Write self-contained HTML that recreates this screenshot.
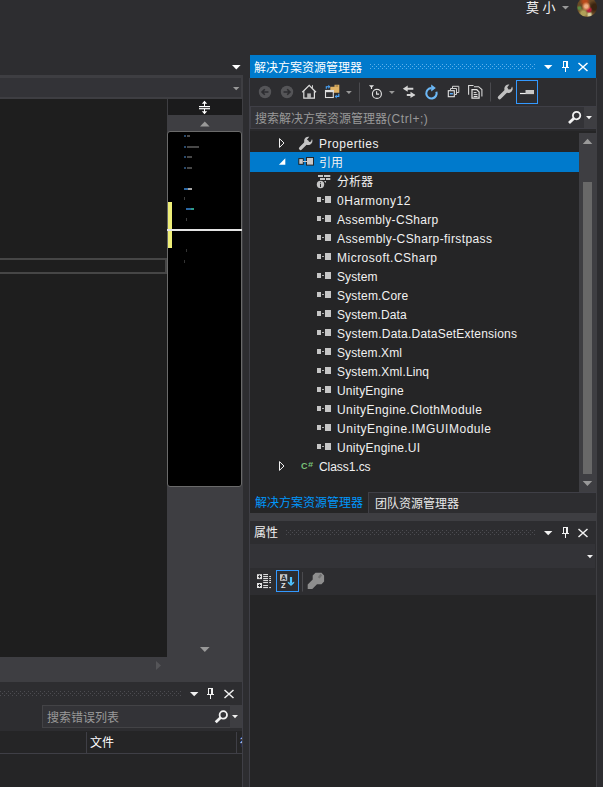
<!DOCTYPE html>
<html lang="zh-CN">
<head>
<meta charset="utf-8">
<title>Visual Studio</title>
<style>
html,body{margin:0;padding:0;}
body{width:603px;height:787px;overflow:hidden;background:#2d2d30;position:relative;
 font-family:"Liberation Sans","Noto Sans CJK SC",sans-serif;font-size:12px;color:#f1f1f1;}
.a{position:absolute;}
.t{position:absolute;white-space:nowrap;line-height:16px;height:16px;}
svg{position:absolute;overflow:visible;}
.grip{position:absolute;height:5px;
 background-image:radial-gradient(circle at .5px .5px,var(--g) .6px,transparent .7px),radial-gradient(circle at 2.5px 2.5px,var(--g) .6px,transparent .7px);
 background-size:4px 4px;}
.row{position:absolute;left:250px;width:329px;height:19px;}
.row .t{top:3px;}
</style>
</head>
<body>

<!-- ===== top-right user ===== -->
<div class="t" id="user" style="left:526px;top:0px;font-size:13px;">莫 小</div>
<svg style="left:562px;top:6px" width="7" height="4"><path d="M0 0h7l-3.5 3.5z" fill="#999"/></svg>
<div class="a" id="avatar" style="left:577px;top:-3px;width:19.500px;height:20px;border-radius:50%;overflow:hidden;
 background:radial-gradient(circle at 46% 47%,#f0b088 0 10%,rgba(232,150,100,.9) 16%,rgba(200,90,50,0) 30%),
 radial-gradient(circle at 60% 64%,#b81c3c 0 9%,rgba(160,30,50,0) 20%),
 radial-gradient(circle at 32% 82%,#b0a058 0 10%,rgba(150,130,60,0) 26%),
 radial-gradient(circle at 62% 88%,#d6cf9c 0 6%,rgba(200,190,120,0) 16%),
 radial-gradient(circle at 12% 56%,#5c8c44 0 5%,rgba(70,110,50,0) 14%),
 radial-gradient(circle at 40% 22%,#b84a1c 0 10%,rgba(150,60,20,0) 28%),
 radial-gradient(circle at 88% 50%,#3a2410 0 14%,rgba(60,40,20,0) 34%),
 #6a4a26;"></div>

<!-- ===== document well ===== -->
<svg style="left:232px;top:65px" width="9" height="5"><path d="M0 0h8.6l-4.3 4.4z" fill="#fff"/></svg>
<div class="a" style="left:0;top:75px;width:243px;height:24px;background:#3e3e42;"></div>
<div class="a" style="left:0;top:78px;width:241px;height:19px;background:#333337;"></div>
<svg style="left:233px;top:87px" width="7" height="4"><path d="M0 0h6.4l-3.2 3.3z" fill="#999"/></svg>

<!-- editor -->
<div class="a" style="left:0;top:99px;width:167px;height:558px;background:#1e1e1e;"></div>
<div class="a" style="left:-2px;top:258px;width:165px;height:12px;border:2px solid #464646;"></div>
<!-- scroll column -->
<div class="a" style="left:167px;top:99px;width:76px;height:583px;background:#3e3e42;"></div>
<div class="a" style="left:0;top:657px;width:243px;height:25px;background:#3e3e42;"></div>
<div class="a" style="left:168px;top:99px;width:74px;height:16px;background:#1b1b1c;"></div>
<!-- split icon -->
<svg style="left:198px;top:100px" width="14" height="15">
 <rect x="1" y="6" width="11" height="1.200" fill="#fff"/><rect x="1" y="8.100" width="11" height="1.200" fill="#fff"/>
 <rect x="6" y="1.500" width="1" height="4.500" fill="#fff"/><rect x="6" y="9" width="1" height="4.500" fill="#fff"/>
 <path d="M6.500 .8l2.700 3h-5.400zM6.500 14.300l2.700-3h-5.400z" fill="#fff"/>
</svg>
<svg style="left:200px;top:120.5px" width="10" height="6"><path d="M0 5.500h9.600l-4.800-5z" fill="#999"/></svg>
<svg style="left:200px;top:647px" width="10" height="6"><path d="M0 0h9.6l-4.8 5z" fill="#999"/></svg>
<svg style="left:156px;top:661px" width="6" height="10"><path d="M0 0v9l5-4.5z" fill="#555558"/></svg>
<!-- minimap -->
<div class="a" id="minimap" style="left:167px;top:131px;width:73px;height:354px;background:#000;border:1px solid #6a6a6a;border-radius:3px;"></div>
<div class="a" style="left:168px;top:202px;width:4px;height:46px;background:#eeee78;"></div>
<div class="a" style="left:167px;top:229px;width:75px;height:2px;background:#e4e4e4;"></div>
<!-- minimap code bits -->
<div class="a" style="left:184px;top:135px;width:2px;height:2px;background:#27486b"></div><div class="a" style="left:187px;top:135px;width:3px;height:2px;background:#4c4c4c"></div>
<div class="a" style="left:184px;top:146px;width:2px;height:2px;background:#27486b"></div><div class="a" style="left:187px;top:146px;width:12px;height:2px;background:#474747"></div>
<div class="a" style="left:184px;top:156px;width:2px;height:2px;background:#27486b"></div><div class="a" style="left:187px;top:156px;width:5px;height:2px;background:#474747"></div>
<div class="a" style="left:184px;top:167px;width:2px;height:2px;background:#27486b"></div><div class="a" style="left:187px;top:167px;width:5px;height:2px;background:#474747"></div>
<div class="a" style="left:184px;top:188px;width:4px;height:2px;background:#2b68a4"></div><div class="a" style="left:188px;top:188px;width:4px;height:2px;background:#a8a8a8"></div>
<div class="a" style="left:184px;top:197px;width:1px;height:3px;background:#3c3c3c"></div>
<div class="a" style="left:186px;top:208px;width:5px;height:2px;background:#2b68a4"></div><div class="a" style="left:191px;top:208px;width:3px;height:2px;background:#2f9a86"></div>
<div class="a" style="left:186px;top:218px;width:1px;height:3px;background:#3c3c3c"></div>
<div class="a" style="left:186px;top:249px;width:1px;height:3px;background:#333"></div>
<div class="a" style="left:184px;top:260px;width:1px;height:3px;background:#333"></div>

<!-- ===== error list (bottom-left) ===== -->
<div class="a" style="left:0;top:682px;width:242px;height:23px;background:#2d2d30;"></div>
<div class="a" style="left:242px;top:682px;width:1px;height:105px;background:#3f3f46;"></div>
<div class="grip" style="--g:#4c4c51;left:0;top:691px;width:181px;"></div>
<svg style="left:190px;top:692px" width="9" height="5"><path d="M0 0h8.4l-4.2 4.3z" fill="#f1f1f1"/></svg>
<svg style="left:207px;top:688px" width="8" height="11"><g fill="#f1f1f1"><rect x="1" y="0" width="1" height="6"/><rect x="1" y="0" width="5" height="1"/><rect x="4" y="0" width="2" height="6"/><rect x="0" y="6" width="7" height="1"/><rect x="3" y="7" width="1" height="4"/></g></svg>
<svg style="left:224px;top:690px" width="10" height="8"><path d="M.5 0l9 8M9.5 0l-9 8" stroke="#f1f1f1" stroke-width="1.5"/></svg>
<div class="a" style="left:42px;top:705px;width:187px;height:21px;background:#333337;border:1px solid #434346;border-right:none;"></div>
<div class="a" style="left:230px;top:705px;width:12px;height:23px;background:#3e3e42;"></div>
<div class="t" style="left:47px;top:710px;color:#999;">搜索错误列表</div>
<svg style="left:214px;top:710px" width="14" height="13"><circle cx="9.300" cy="4.900" r="3.700" fill="none" stroke="#f1f1f1" stroke-width="1.800"/><path d="M6.700 7.600L1.700 12.300" stroke="#f1f1f1" stroke-width="2.800"/></svg>
<svg style="left:232px;top:715px" width="7" height="4"><path d="M0 0h6l-3 3.2z" fill="#f1f1f1"/></svg>
<div class="a" style="left:0;top:731px;width:242px;height:56px;background:#252526;"></div>
<div class="a" style="left:0;top:753px;width:242px;height:1px;background:#3f3f46;"></div>
<div class="a" style="left:86px;top:732px;width:1px;height:21px;background:#3f3f46;"></div>
<div class="a" style="left:236px;top:732px;width:1px;height:21px;background:#3f3f46;"></div>
<div class="t" style="left:90px;top:735px;color:#fff;">文件</div>
<div class="a" style="left:240px;top:737px;width:2px;height:10px;overflow:hidden;"><span class="t" style="left:0;top:-2px;color:#cfd6ff;">行</span></div>

<!-- ===== right column frame ===== -->
<div class="a" style="left:596px;top:78px;width:1px;height:709px;background:#3e3e42;"></div>
<div class="a" style="left:249px;top:78px;width:1px;height:709px;background:#3f3f46;"></div>

<!-- ===== Solution Explorer ===== -->
<div class="a" style="left:250px;top:55px;width:346px;height:23px;background:#007acc;"></div>
<div class="t" style="left:254px;top:60px;color:#fff;">解决方案资源管理器</div>
<div class="grip" style="--g:#5fb0ea;left:370px;top:64px;width:166px;"></div>
<svg style="left:544px;top:65px" width="9" height="5"><path d="M0 0h8.4l-4.2 4.3z" fill="#fff"/></svg>
<svg style="left:562px;top:61px" width="8" height="11"><g fill="#fff"><rect x="1" y="0" width="1" height="6"/><rect x="1" y="0" width="5" height="1"/><rect x="4" y="0" width="2" height="6"/><rect x="0" y="6" width="7" height="1"/><rect x="3" y="7" width="1" height="4"/></g></svg>
<svg style="left:578px;top:63px" width="10" height="8"><path d="M.5 0l9 8M9.5 0l-9 8" stroke="#fff" stroke-width="1.5"/></svg>

<!-- toolbar -->
<div class="a" style="left:250px;top:78px;width:346px;height:28px;background:#2d2d30;"></div>
<svg id="tb" style="left:250px;top:78px" width="346" height="28">
 <!-- back / forward -->
 <circle cx="15" cy="14" r="6.2" fill="#555558"/><path d="M12 14h6.5M14.8 11.2L12 14l2.8 2.8" stroke="#2d2d30" stroke-width="1.6" fill="none"/>
 <circle cx="37" cy="14" r="6.2" fill="#555558"/><path d="M33.5 14h6.5M37.2 11.2L40 14l-2.8 2.8" stroke="#2d2d30" stroke-width="1.6" fill="none"/>
 <!-- home -->
 <path d="M52.300 14.300L59.200 7.400L66 14.300" stroke="#dedede" stroke-width="1.300" fill="none"/>
 <path d="M53.800 13.200v6.900h10.600v-6.900" stroke="#dedede" stroke-width="1.200" fill="none"/>
 <path d="M62.500 7.200v3.200" stroke="#c8c8c8" stroke-width="1"/>
 <rect x="57.200" y="15.400" width="3.700" height="4.600" fill="#b4b4b4"/>
 <!-- sync with active doc -->
 <path d="M80.300 8.800h4.200v-2h4.800v7.900h-9z" fill="#e0b265"/>
 <path d="M85.500 8h2.600" stroke="#7a5f30" stroke-width=".8"/>
 <rect x="75.500" y="12.500" width="7.800" height="7" fill="#2d2d30" stroke="#dedede" stroke-width="1.100"/>
 <rect x="75" y="12" width="8.800" height="2.200" fill="#dedede"/>
 <path d="M76.300 10.800v-2h2.500" stroke="#4aa8ff" stroke-width="1.100" fill="none"/><path d="M78.400 6.800l1.900 2-1.900 2z" fill="#4aa8ff"/>
 <path d="M88.800 15.800v2.600h-2.500" stroke="#4aa8ff" stroke-width="1.100" fill="none"/><path d="M86.700 16.400l-1.900 2 1.900 2z" fill="#4aa8ff"/>
 <path d="M96 13.100h5.800l-2.900 3z" fill="#999"/>
 <path d="M109.500 4.500v19" stroke="#4a4a4e" stroke-width="1"/>
 <!-- pending changes filter (clock) -->
 <circle cx="126.900" cy="15.900" r="4.500" fill="none" stroke="#e2e2e2" stroke-width="1.150"/>
 <path d="M126.600 13.200v2.900h2.500" stroke="#e2e2e2" stroke-width="1.100" fill="none"/>
 <path d="M118.900 7.200h5.200l-2 2v1.900h-1.200v-1.900z" fill="#e2e2e2"/>
 <path d="M139 13.100h5.800l-2.900 3z" fill="#999"/>
 <!-- sync arrows -->
 <path d="M155.500 10.700h7.800M156.800 16.900h7.500" stroke="#d4d4d4" stroke-width="2" fill="none"/>
 <path d="M152.800 10.700l4.900-3.100v6.200zM165.400 16.900l-4.900-3.100v6.200z" fill="#d4d4d4"/>
 <!-- refresh -->
 <path d="M181.400 10.100A5.200 5.200 0 1 0 186.400 13.700" stroke="#6cb8f6" stroke-width="2.100" fill="none"/>
 <path d="M181.200 6.600l4.600 3.500-4.600 3.400z" fill="#6cb8f6"/>
 <!-- collapse all -->
 <path d="M200.500 12v-1.500h6v6h-1.500M202.500 10v-1.700h6.300v6.200h-1.800" stroke="#d0d0d0" stroke-width="1" fill="none"/>
 <rect x="198.300" y="12.700" width="6" height="6" fill="#2d2d30" stroke="#e4e4e4" stroke-width="1.100"/>
 <path d="M199.900 15.700h3" stroke="#5aaaf5" stroke-width="1.500"/>
 <!-- show all files -->
 <path d="M218.600 16.700v-9.200h4.900" stroke="#d8d8d8" stroke-width="1.100" fill="none"/>
 <path d="M224 8.700h4.600l3.300 2.900v7" stroke="#d8d8d8" stroke-width="1.100" fill="none"/>
 <path d="M222 11.700h4.800l2.300 2.200v6.300h-7.100z" fill="#2d2d30" stroke="#e4e4e4" stroke-width="1.200"/>
 <path d="M223.700 14.600h2.800M223.700 16.600h3.800M223.700 18.500h3.800" stroke="#e4e4e4" stroke-width="1"/>
 <path d="M240.500 4.500v19" stroke="#4a4a4e" stroke-width="1"/>
 <!-- wrench -->
 <path d="M249.600 19.600l6.800-6.800" stroke="#c0c0c0" stroke-width="3.600" stroke-linecap="round"/>
 <path d="M262 8.400a4.200 4.200 0 1 1-2.600-1.800l-2.200 2.600 1.300 2.300 2.400-.2z" fill="#c0c0c0"/>
 <!-- preview selected -->
 <rect x="266.500" y="2.500" width="21" height="23" fill="none" stroke="#3399ff" stroke-width="1"/>
 <path d="M270 15.500h14" stroke="#f1f1f1" stroke-width="1.200"/><rect x="275.500" y="12" width="8.500" height="4" fill="#c8c8c8"/>
</svg>

<!-- search -->
<div class="a" style="left:250px;top:106px;width:346px;height:1px;background:#3f3f46;"></div>
<div class="a" style="left:250px;top:107px;width:334px;height:21px;background:#333337;border-left:1px solid #3f3f46;box-sizing:border-box;"></div>
<div class="a" style="left:584px;top:107px;width:12px;height:21px;background:#3e3e42;"></div>
<div class="a" style="left:250px;top:128px;width:346px;height:1px;background:#3f3f46;"></div>
<div class="t" style="left:255px;top:111px;color:#999;">搜索解决方案资源管理器<span style="letter-spacing:.55px">(Ctrl+;)</span></div>
<svg style="left:567px;top:111px" width="14" height="13"><circle cx="9.600" cy="4.600" r="3.700" fill="none" stroke="#f1f1f1" stroke-width="1.800"/><path d="M7 7.300L2 12" stroke="#f1f1f1" stroke-width="2.800"/></svg>
<svg style="left:586px;top:116px" width="7" height="4"><path d="M0 0h6l-3 3.200z" fill="#f1f1f1"/></svg>

<!-- tree -->
<div class="a" style="left:250px;top:129px;width:346px;height:2px;background:#2a2a2c;"></div><div class="a" style="left:250px;top:131px;width:346px;height:361px;background:#252526;"></div>
<div class="a" style="left:579px;top:133px;width:17px;height:359px;background:#3e3e42;"></div>
<svg style="left:582px;top:138px" width="11" height="6"><path d="M.8 5.900h9.500l-4.750-5.100z" fill="#999"/></svg>
<svg style="left:582px;top:481px" width="11" height="6"><path d="M.7 0h9.500l-4.750 5.100z" fill="#999"/></svg>
<div class="a" style="left:583px;top:182px;width:9px;height:292px;background:#686868;"></div>

<div id="tree">
<div class="row" style="top:133px;"><svg style="left:29px;top:5px" width="6" height="10"><path d="M.5 .6L5 5 .5 9.400z" fill="none" stroke="#f1f1f1" stroke-width="1"/></svg><svg style="left:48px;top:3px" width="15" height="15"><path d="M2.600 12.400l6.600-6.600" stroke="#c4c4c4" stroke-width="3.400" stroke-linecap="round"/><path d="M14 2.900a4.200 4.200 0 1 1-2.700-2.100l-2.300 2.700 1.300 2.400 2.500-.2z" fill="#c4c4c4"/></svg><span class="t" style="left:69px;letter-spacing:0.53px;">Properties</span></div>
<div class="a" style="left:250px;top:152px;width:329px;height:20px;background:#007acc;"></div><div class="row" style="top:152px;"><svg style="left:29px;top:6px" width="7" height="7"><path d="M6.300 .3v6.400H-.1z" fill="#fff"/></svg><svg style="left:48px;top:5px" width="16" height="9"><g stroke="#252526" stroke-width="2"><rect x="1.300" y="2.100" width="3.500" height="4.700"/><rect x="9" y="1" width="6" height="6.600"/></g><rect x="1.300" y="2.100" width="3.500" height="4.700" fill="#c8c8c8"/><path d="M5 4.500h4" stroke="#c8c8c8" stroke-width="1"/><rect x="9" y="1" width="6" height="6.600" fill="#c8c8c8"/></svg><span class="t" style="left:69px;">引用</span></div>
<div class="row" style="top:171px;"><svg style="left:67px;top:4px" width="14" height="14"><g fill="#c6c6c6"><rect x="1" y="0" width="5" height="2"/><rect x="7" y="0" width="6.300" height="2"/><rect x="3" y="3" width="5" height="2"/><rect x="9" y="3" width="4.300" height="2"/><path d="M7 6h2v2z"/><circle cx="3.500" cy="9.500" r="3.700"/></g><rect x="3" y="7.300" width="1" height="1" fill="#252526"/><rect x="3" y="9" width="1" height="3" fill="#252526"/></svg><span class="t" style="left:87px;">分析器</span></div>
<div class="row" style="top:190px;"><svg style="left:67px;top:6px" width="15" height="8"><g fill="#c6c6c6"><rect x="0" y="1" width="4" height="5"/><rect x="5" y="3" width="2" height="1" fill="#b0b0b0"/><rect x="8" y="0" width="6" height="7"/></g></svg><span class="t" style="left:87px;letter-spacing:0.52px;">0Harmony12</span></div>
<div class="row" style="top:209px;"><svg style="left:67px;top:6px" width="15" height="8"><g fill="#c6c6c6"><rect x="0" y="1" width="4" height="5"/><rect x="5" y="3" width="2" height="1" fill="#b0b0b0"/><rect x="8" y="0" width="6" height="7"/></g></svg><span class="t" style="left:87px;letter-spacing:0.32px;">Assembly-CSharp</span></div>
<div class="row" style="top:228px;"><svg style="left:67px;top:6px" width="15" height="8"><g fill="#c6c6c6"><rect x="0" y="1" width="4" height="5"/><rect x="5" y="3" width="2" height="1" fill="#b0b0b0"/><rect x="8" y="0" width="6" height="7"/></g></svg><span class="t" style="left:87px;letter-spacing:0.40px;">Assembly-CSharp-firstpass</span></div>
<div class="row" style="top:247px;"><svg style="left:67px;top:6px" width="15" height="8"><g fill="#c6c6c6"><rect x="0" y="1" width="4" height="5"/><rect x="5" y="3" width="2" height="1" fill="#b0b0b0"/><rect x="8" y="0" width="6" height="7"/></g></svg><span class="t" style="left:87px;letter-spacing:0.49px;">Microsoft.CSharp</span></div>
<div class="row" style="top:266px;"><svg style="left:67px;top:6px" width="15" height="8"><g fill="#c6c6c6"><rect x="0" y="1" width="4" height="5"/><rect x="5" y="3" width="2" height="1" fill="#b0b0b0"/><rect x="8" y="0" width="6" height="7"/></g></svg><span class="t" style="left:87px;letter-spacing:0.10px;">System</span></div>
<div class="row" style="top:285px;"><svg style="left:67px;top:6px" width="15" height="8"><g fill="#c6c6c6"><rect x="0" y="1" width="4" height="5"/><rect x="5" y="3" width="2" height="1" fill="#b0b0b0"/><rect x="8" y="0" width="6" height="7"/></g></svg><span class="t" style="left:87px;letter-spacing:0.18px;">System.Core</span></div>
<div class="row" style="top:304px;"><svg style="left:67px;top:6px" width="15" height="8"><g fill="#c6c6c6"><rect x="0" y="1" width="4" height="5"/><rect x="5" y="3" width="2" height="1" fill="#b0b0b0"/><rect x="8" y="0" width="6" height="7"/></g></svg><span class="t" style="left:87px;letter-spacing:0.10px;">System.Data</span></div>
<div class="row" style="top:323px;"><svg style="left:67px;top:6px" width="15" height="8"><g fill="#c6c6c6"><rect x="0" y="1" width="4" height="5"/><rect x="5" y="3" width="2" height="1" fill="#b0b0b0"/><rect x="8" y="0" width="6" height="7"/></g></svg><span class="t" style="left:87px;letter-spacing:0.21px;">System.Data.DataSetExtensions</span></div>
<div class="row" style="top:342px;"><svg style="left:67px;top:6px" width="15" height="8"><g fill="#c6c6c6"><rect x="0" y="1" width="4" height="5"/><rect x="5" y="3" width="2" height="1" fill="#b0b0b0"/><rect x="8" y="0" width="6" height="7"/></g></svg><span class="t" style="left:87px;letter-spacing:0.11px;">System.Xml</span></div>
<div class="row" style="top:361px;"><svg style="left:67px;top:6px" width="15" height="8"><g fill="#c6c6c6"><rect x="0" y="1" width="4" height="5"/><rect x="5" y="3" width="2" height="1" fill="#b0b0b0"/><rect x="8" y="0" width="6" height="7"/></g></svg><span class="t" style="left:87px;letter-spacing:0.14px;">System.Xml.Linq</span></div>
<div class="row" style="top:380px;"><svg style="left:67px;top:6px" width="15" height="8"><g fill="#c6c6c6"><rect x="0" y="1" width="4" height="5"/><rect x="5" y="3" width="2" height="1" fill="#b0b0b0"/><rect x="8" y="0" width="6" height="7"/></g></svg><span class="t" style="left:87px;letter-spacing:0.20px;">UnityEngine</span></div>
<div class="row" style="top:399px;"><svg style="left:67px;top:6px" width="15" height="8"><g fill="#c6c6c6"><rect x="0" y="1" width="4" height="5"/><rect x="5" y="3" width="2" height="1" fill="#b0b0b0"/><rect x="8" y="0" width="6" height="7"/></g></svg><span class="t" style="left:87px;letter-spacing:0.43px;">UnityEngine.ClothModule</span></div>
<div class="row" style="top:418px;"><svg style="left:67px;top:6px" width="15" height="8"><g fill="#c6c6c6"><rect x="0" y="1" width="4" height="5"/><rect x="5" y="3" width="2" height="1" fill="#b0b0b0"/><rect x="8" y="0" width="6" height="7"/></g></svg><span class="t" style="left:87px;letter-spacing:0.54px;">UnityEngine.IMGUIModule</span></div>
<div class="row" style="top:437px;"><svg style="left:67px;top:6px" width="15" height="8"><g fill="#c6c6c6"><rect x="0" y="1" width="4" height="5"/><rect x="5" y="3" width="2" height="1" fill="#b0b0b0"/><rect x="8" y="0" width="6" height="7"/></g></svg><span class="t" style="left:87px;letter-spacing:0.23px;">UnityEngine.UI</span></div>
<div class="row" style="top:456px;"><svg style="left:29px;top:5px" width="6" height="10"><path d="M.5 .6L5 5 .5 9.400z" fill="none" stroke="#f1f1f1" stroke-width="1"/></svg><span class="t" style="left:51px;top:2px;color:#79c279;font-weight:bold;font-size:9px;">C<span style="font-size:8px;position:relative;top:-2px;display:inline-block;transform:scaleX(1.150);transform-origin:0 50%;">#</span></span><span class="t" style="left:69px;letter-spacing:-0.05px;">Class1.cs</span></div>
</div>

<!-- tabs -->
<div class="a" style="left:250px;top:492px;width:118px;height:21px;background:#252526;"></div>
<div class="a" style="left:368px;top:492px;width:1px;height:21px;background:#3f3f46;"></div><div class="a" style="left:368px;top:492px;width:228px;height:1px;background:#3f3f46;"></div>
<div class="t" style="left:255px;top:495px;color:#0097fb;">解决方案资源管理器</div>
<div class="t" style="left:375px;top:496px;color:#e8e8e8;">团队资源管理器</div>
<div class="a" style="left:249px;top:513px;width:348px;height:8px;background:#3e3e42;"></div>

<!-- ===== Properties ===== -->
<div class="a" style="left:250px;top:521px;width:346px;height:23px;background:#2d2d30;"></div>
<div class="t" style="left:254px;top:525px;">属性</div>
<div class="grip" style="--g:#4c4c51;left:286px;top:530px;width:250px;"></div>
<svg style="left:544px;top:531px" width="9" height="5"><path d="M0 0h8.400l-4.200 4.300z" fill="#f1f1f1"/></svg>
<svg style="left:562px;top:527px" width="8" height="11"><g fill="#f1f1f1"><rect x="1" y="0" width="1" height="6"/><rect x="1" y="0" width="5" height="1"/><rect x="4" y="0" width="2" height="6"/><rect x="0" y="6" width="7" height="1"/><rect x="3" y="7" width="1" height="4"/></g></svg>
<svg style="left:578px;top:529px" width="10" height="8"><path d="M.5 0l9 8M9.500 0l-9 8" stroke="#f1f1f1" stroke-width="1.500"/></svg>
<div class="a" style="left:250px;top:544px;width:345px;height:24px;background:#333337;"></div>
<svg style="left:587px;top:555px" width="7" height="4"><path d="M0 0h6l-3 3.200z" fill="#f1f1f1"/></svg>
<div class="a" style="left:250px;top:568px;width:346px;height:27px;background:#2d2d30;"></div>
<div class="a" style="left:250px;top:595px;width:346px;height:192px;background:#252526;"></div>
<svg id="ptb" style="left:250px;top:568px" width="100" height="27">
 <!-- categorized -->
 <g fill="#e2e2e2"><rect x="7" y="6.200" width="5" height="4.900"/><rect x="7" y="15" width="5" height="5"/></g>
 <path d="M8 8.650h3M9.500 7.150v3M8 17.500h3M9.500 16v3" stroke="#2d2d30" stroke-width="1"/>
 <g fill="#dadada"><rect x="13.200" y="6" width="4.800" height="1.100"/><rect x="13.200" y="8" width="4.800" height="1.100"/><rect x="13.200" y="10" width="4.800" height="1.100"/><rect x="13.200" y="12" width="4.800" height="1.100"/><rect x="13.200" y="14" width="4.800" height="1.100"/><rect x="13.200" y="17" width="4.800" height="1.100"/><rect x="13.200" y="19" width="4.800" height="1.100"/>
 <rect x="19.200" y="8" width="1.800" height="1.100"/><rect x="19.200" y="10" width="1.800" height="1.100"/><rect x="19.200" y="12" width="1.800" height="1.100"/><rect x="19.200" y="14" width="1.800" height="1.100"/><rect x="19.200" y="19" width="1.800" height="1.100"/></g>
 <!-- alphabetical selected -->
 <rect x="26.500" y="2.500" width="22" height="21" fill="none" stroke="#3399ff"/>
 <rect x="30" y="6.200" width="7.200" height="6.600" fill="#c8c8c8"/>
 <text x="33.600" y="12.300" font-size="7.500" font-weight="bold" fill="#2d2d30" text-anchor="middle" font-family="Liberation Sans, sans-serif">A</text>
 <text x="33.400" y="20" font-size="7.500" font-weight="bold" fill="#e6e6e6" text-anchor="middle" font-family="Liberation Sans, sans-serif">Z</text>
 <path d="M41 9v6.500" stroke="#4fc3ff" stroke-width="2.200" fill="none"/><path d="M37.800 13.400l3.200 2 3.200-2v1.600l-3.200 2.900-3.200-2.900z" fill="#4fc3ff"/>
 <path d="M52.500 4v19.600" stroke="#4a4a4e"/>
 <!-- property pages (key) -->
 <path d="M65.500 4.700h6l2.600 2.800v6l-2.600 2.700h-4.500l-4.700 4.800h-4.600v-4.500l5-5v-4z" fill="#8e8e8e"/>
 <path d="M71.300 6.500l-2.500 3.400" stroke="#717171" stroke-width="2.300"/>
</svg>

</body>
</html>
